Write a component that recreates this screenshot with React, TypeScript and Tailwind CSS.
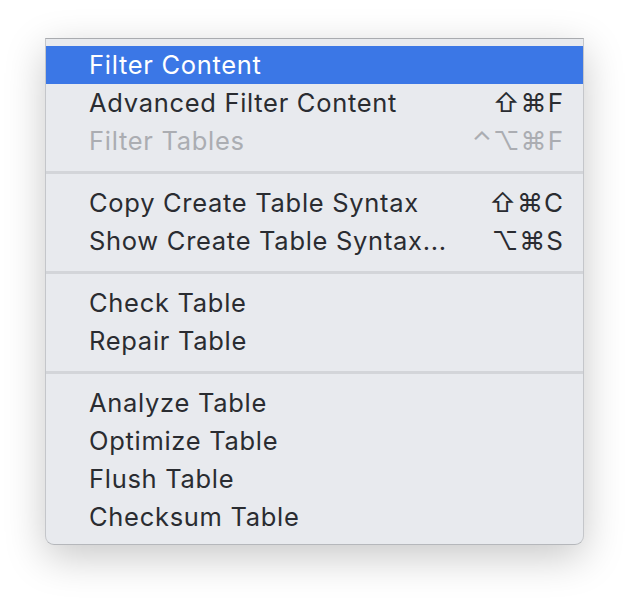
const font = { fontFamily: '"Inter", "Open Sans", "Noto Sans", sans-serif' };

type Item = { label: string; keys?: string; disabled?: boolean; active?: boolean };

const groups: Item[][] = [
  [
    { label: "Filter Content", active: true },
    { label: "Advanced Filter Content", keys: "⇧⌘F" },
    { label: "Filter Tables", keys: "⌃⌥⌘F", disabled: true },
  ],
  [
    { label: "Copy Create Table Syntax", keys: "⇧⌘C" },
    { label: "Show Create Table Syntax...", keys: "⌥⌘S" },
  ],
  [{ label: "Check Table" }, { label: "Repair Table" }],
  [
    { label: "Analyze Table" },
    { label: "Optimize Table" },
    { label: "Flush Table" },
    { label: "Checksum Table" },
  ],
];

function Row({ item }: { item: Item }) {
  const color = item.active
    ? "bg-[#3b77e6] text-white"
    : item.disabled
      ? "text-[#abadb2]"
      : "text-[#2a2c31]";
  return (
    <div className={`flex h-[38px] items-center justify-between pl-[43px] pr-[19px] ${color}`}>
      <span className="text-[25.5px] leading-none tracking-[0.7px]">{item.label}</span>
      {item.keys ? (
        <span className="text-[26px] leading-none tracking-[1px]">{item.keys}</span>
      ) : null}
    </div>
  );
}

export default function App() {
  return (
    <div className="h-[598px] w-[630px] bg-white pt-[38px] pl-[45px]" style={font}>
      <div className="w-[539px] rounded-b-[9px] border border-t-[#a9abaf] border-x-[#c4c6ca] border-b-[#b5b7bb] bg-[#e8eaee] pt-[7px] pb-[8px] shadow-[0_12px_40px_rgba(0,0,0,0.22)]">
        {groups.map((g, gi) => (
          <div key={gi}>
            {gi > 0 ? (
              <div className="flex h-[24px] items-center">
                <div className="h-[3px] w-full bg-[#d3d5d9]" />
              </div>
            ) : null}
            {g.map((item) => (
              <Row key={item.label} item={item} />
            ))}
          </div>
        ))}
      </div>
    </div>
  );
}
